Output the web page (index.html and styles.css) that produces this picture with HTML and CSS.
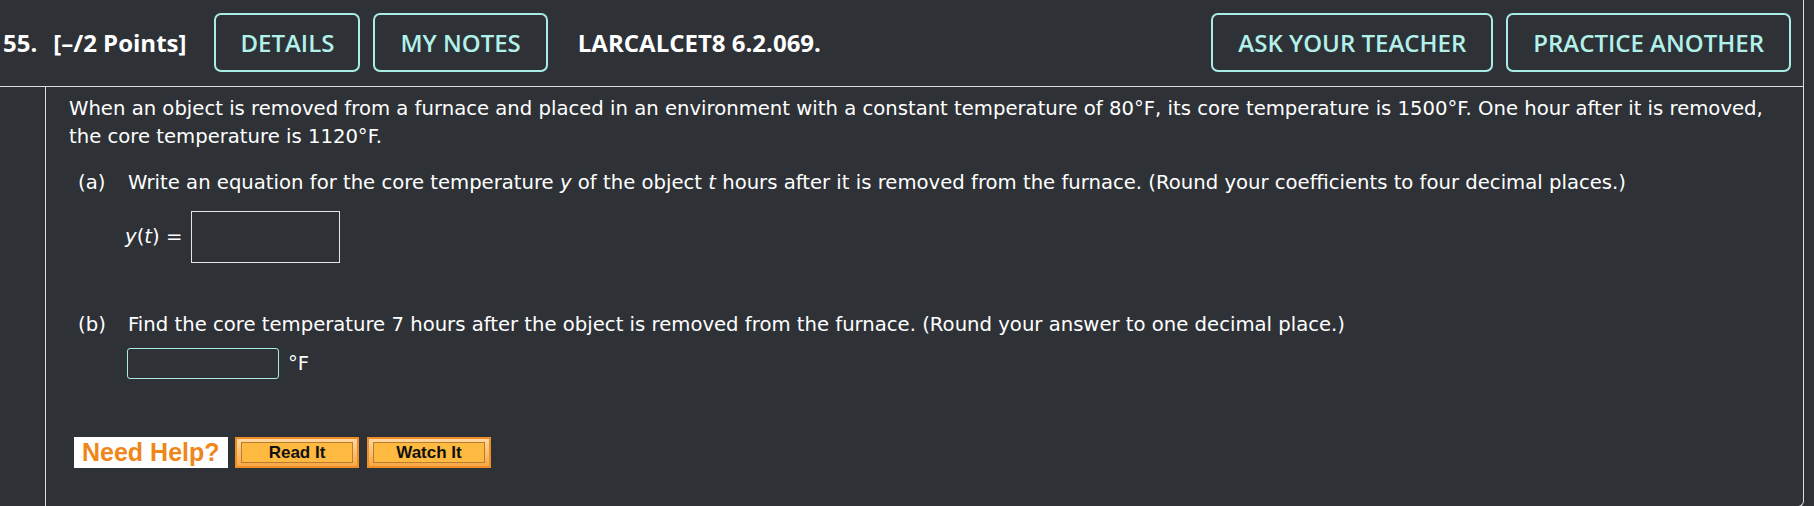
FILE: index.html
```html
<!DOCTYPE html>
<html>
<head>
<meta charset="utf-8">
<link rel="stylesheet" href="styles.css">
</head>
<body>
<div class="question">
  <div class="qhead">
    <span class="qnum">55.</span>
    <span class="qpts">[–/2 Points]</span>
    <button class="hbtn first">DETAILS</button>
    <button class="hbtn">MY NOTES</button>
    <span class="qref">LARCALCET8 6.2.069.</span>
    <span class="spacer"></span>
    <button class="hbtn">ASK YOUR TEACHER</button>
    <button class="hbtn">PRACTICE ANOTHER</button>
  </div>
  <div class="qbody">
    <div class="qinner">
      <p class="stem">When an object is removed from a furnace and placed in an environment with a constant temperature of 80°F, its core temperature is 1500°F. One hour after it is removed, the core temperature is 1120°F.</p>
      <div class="part part-a"><span class="plabel">(a)</span><span>Write an equation for the core temperature <i>y</i> of the object <i>t</i> hours after it is removed from the furnace. (Round your coefficients to four decimal places.)</span></div>
      <div class="answer answer-a"><span class="eq"><i>y</i>(<i>t</i>) =</span><span class="box-a"></span></div>
      <div class="part part-b"><span class="plabel">(b)</span><span>Find the core temperature 7 hours after the object is removed from the furnace. (Round your answer to one decimal place.)</span></div>
      <div class="answer answer-b"><span class="box-b"></span><span class="unit">°F</span></div>
      <div class="help">
        <span class="need">Need Help?</span>
        <span class="helpbtn"><span>Read It</span></span>
        <span class="helpbtn"><span>Watch It</span></span>
      </div>
    </div>
  </div>
</div>
</body>
</html>
```
FILE: styles.css
```css
html, body {
  margin: 0;
  padding: 0;
  background: #2e3237;
}
body {
  color: #ffffff;
  font-family: "DejaVu Sans", Verdana, sans-serif;
  overflow: hidden;
}
.question {
  width: 1804px;
  height: 507px;
  box-sizing: border-box;
  border-right: 1px solid #dcdcdc;
  border-bottom: 1px solid #dcdcdc;
  border-bottom-right-radius: 6px;
  display: flex;
  flex-direction: column;
}
.qhead {
  height: 86px;
  box-sizing: border-box;
  flex: none;
  display: flex;
  align-items: center;
  padding: 0 12px 2px 3px;
  font-family: "Open Sans", sans-serif;
  font-size: 24px;
}
.qnum, .qpts, .qref {
  font-weight: 700;
  color: #ffffff;
}
.qpts {
  margin-left: 16px;
}
.qref {
  margin-left: 30px;
}
.spacer {
  flex: 1;
}
.hbtn {
  height: 59px;
  box-sizing: border-box;
  padding: 0 25px;
  border: 2px solid #a9ece5;
  border-radius: 7px;
  background: transparent;
  color: #b2f1ea;
  font-family: "Open Sans", sans-serif;
  font-size: 24px;
  font-weight: 600;
  margin-left: 13px;
}
.hbtn.first {
  margin-left: 28px;
  padding: 0 24px;
}
.qbody {
  flex: 1;
  border-top: 1px solid #dcdcdc;
  display: flex;
}
.qinner {
  margin-left: 45px;
  flex: 1;
  border-left: 1px solid #dcdcdc;
  padding: 8px 24px 0 23px;
  font-size: 19.65px;
  line-height: 28px;
}
.stem {
  margin: 0;
}
.part {
  display: flex;
  padding-left: 9px;
}
.plabel {
  width: 50px;
  flex: none;
}
.part-a {
  margin-top: 18px;
}
.answer {
  display: flex;
  align-items: center;
  padding-left: 56px;
}
.answer-a {
  margin-top: 14px;
}
.eq {
  margin-right: 9px;
}
.box-a {
  width: 149px;
  height: 52px;
  box-sizing: border-box;
  border: 1px solid #e6e6e6;
}
.part-b {
  margin-top: 48px;
}
.answer-b {
  margin-top: 9px;
  padding-left: 58px;
}
.box-b {
  width: 152px;
  height: 31px;
  box-sizing: border-box;
  border: 1px solid #a9ece5;
  border-radius: 3px;
}
.unit {
  margin-left: 9px;
}
.help {
  margin-top: 58px;
  padding-left: 5px;
  display: flex;
  align-items: center;
  gap: 7px;
  font-family: "Liberation Sans", Arial, sans-serif;
}
.need {
  display: block;
  width: 154px;
  height: 31px;
  box-sizing: border-box;
  background: #ffffff;
  color: #ef8619;
  font-size: 25px;
  font-weight: 700;
  line-height: 31px;
  padding-left: 8px;
}
.helpbtn {
  display: block;
  width: 124px;
  height: 31px;
  box-sizing: border-box;
  border: 2px solid #ee8e26;
  background: linear-gradient(#ffd7a0, #f9a842);
  padding: 3px 4px;
}
.helpbtn + .helpbtn {
  margin-left: 1px;
}
.helpbtn span {
  display: block;
  height: 21px;
  box-sizing: border-box;
  border: 1px solid #b87d33;
  background: #fdb940;
  color: #111111;
  font-size: 17px;
  font-weight: 700;
  line-height: 19px;
  text-align: center;
}
```
